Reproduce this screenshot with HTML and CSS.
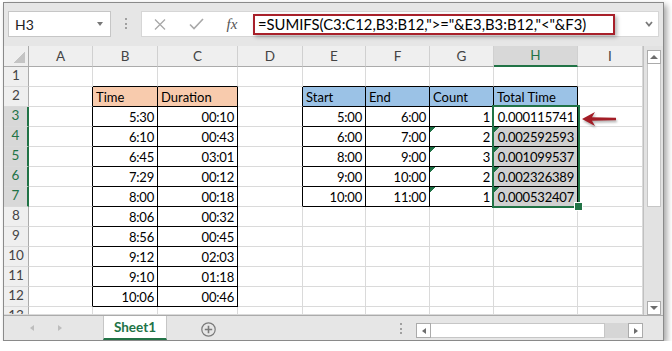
FILE: index.html
```html
<!DOCTYPE html>
<html lang="en">
<head>
  <meta charset="UTF-8">
  <title>SUMIFS time ranges</title>
  <link rel="stylesheet" href="styles.css">
</head>
<body>
<div class="window">
  <!-- name box + formula bar -->
  <div class="formula-bar">
    <div class="name-box"><span>H3</span><i class="caret"></i></div>
    <div class="grip"></div>
    <div class="fx-bar">
      <span class="fx-btn"><svg width="12" height="11" viewBox="0 0 12 11"><path d="M1 0.5 L11 10.5 M11 0.5 L1 10.5" stroke="#a8a8a8" stroke-width="1.3" fill="none"/></svg></span>
      <span class="fx-btn"><svg width="15" height="12" viewBox="0 0 15 12"><path d="M1 6.5 L5 10.5 L14 1" stroke="#a8a8a8" stroke-width="1.6" fill="none"/></svg></span>
      <span class="fx-btn fx-label">fx</span>
      <div class="formula">=SUMIFS(C3:C12,B3:B12,"&gt;="&amp;E3,B3:B12,"&lt;"&amp;F3)</div>
      <svg class="chev" width="8" height="6" viewBox="0 0 8 6"><path d="M1 1 L4 4.5 L7 1" stroke="#7a7a7a" stroke-width="1.8" fill="none"/></svg>
    </div>
  </div>

  <div class="main">
    <div class="grid-wrap">
      <div class="sheet">
        <div class="h corner"></div><div class="h">A</div><div class="h">B</div><div class="h">C</div><div class="h">D</div><div class="h">E</div><div class="h">F</div><div class="h">G</div><div class="h on">H</div><div class="h">I</div>

        <div class="r">1</div><div></div><div class="bt"></div><div class="bt"></div><div></div><div class="bt"></div><div class="bt"></div><div class="bt"></div><div class="bt"></div><div></div>

        <div class="r">2</div><div class="bl"></div><div class="bx or">Time</div><div class="bx or">Duration</div><div class="bl"></div><div class="bx bu">Start</div><div class="bx bu">End</div><div class="bx bu">Count</div><div class="bx bu">Total Time</div><div></div>

        <div class="r on">3</div><div class="bl"></div><div class="bx n">5:30</div><div class="bx n">00:10</div><div class="bl"></div><div class="bx n">5:00</div><div class="bx n">6:00</div><div class="bx n">1</div><div class="bx n">0.000115741</div><div></div>

        <div class="r on">4</div><div class="bl"></div><div class="bx n">6:10</div><div class="bx n">00:43</div><div class="bl"></div><div class="bx n">6:00</div><div class="bx n">7:00</div><div class="bx n tri">2</div><div class="bx n tri sel">0.002592593</div><div></div>

        <div class="r on">5</div><div class="bl"></div><div class="bx n">6:45</div><div class="bx n">03:01</div><div class="bl"></div><div class="bx n">8:00</div><div class="bx n">9:00</div><div class="bx n tri">3</div><div class="bx n tri sel">0.001099537</div><div></div>

        <div class="r on">6</div><div class="bl"></div><div class="bx n">7:29</div><div class="bx n">00:12</div><div class="bl"></div><div class="bx n">9:00</div><div class="bx n">10:00</div><div class="bx n tri">2</div><div class="bx n tri sel">0.002326389</div><div></div>

        <div class="r on">7</div><div class="bl"></div><div class="bx n">8:00</div><div class="bx n">00:18</div><div class="bl"></div><div class="bx n">10:00</div><div class="bx n">11:00</div><div class="bx n tri">1</div><div class="bx n tri sel">0.000532407</div><div></div>

        <div class="r">8</div><div class="bl"></div><div class="bx n">8:06</div><div class="bx n">00:32</div><div></div><div></div><div></div><div></div><div></div><div></div>

        <div class="r">9</div><div class="bl"></div><div class="bx n">8:56</div><div class="bx n">00:45</div><div></div><div></div><div></div><div></div><div></div><div></div>

        <div class="r">10</div><div class="bl"></div><div class="bx n">9:12</div><div class="bx n">02:03</div><div></div><div></div><div></div><div></div><div></div><div></div>

        <div class="r">11</div><div class="bl"></div><div class="bx n">9:10</div><div class="bx n">01:18</div><div></div><div></div><div></div><div></div><div></div><div></div>

        <div class="r">12</div><div class="bl"></div><div class="bx n">10:06</div><div class="bx n">00:46</div><div></div><div></div><div></div><div></div><div></div><div></div>

        <div class="r">13</div><div></div><div></div><div></div><div></div><div></div><div></div><div></div><div></div><div></div>
      </div>

      <!-- selection range and callout arrow drawn over the cells -->
      <div class="overlay">
        <div class="selection"></div>
        <svg class="arrow" width="36" height="16" viewBox="0 0 36 16"><path d="M1 8 L14 1 L11 6.3 L35 6.8 L35 9.2 L11 9.7 L14 15 Z" fill="#a31d26"/></svg>
      </div>
    </div>

    <div class="vscroll">
      <div class="vbtn"><i class="tri-up"></i></div>
      <div class="vthumb"></div>
      <div class="vtrack"></div>
      <div class="vbtn"><i class="tri-down"></i></div>
    </div>
  </div>

  <div class="tabbar">
    <div class="tab-nav"><i class="tri-left"></i><i class="tri-right"></i></div>
    <div class="tab">Sheet1</div>
    <svg class="add" width="15" height="15" viewBox="0 0 15 15"><circle cx="7.5" cy="7.5" r="6.7" stroke="#7a7a7a" stroke-width="1.2" fill="none"/><path d="M7.5 3.8 V11.2 M3.8 7.5 H11.2" stroke="#7a7a7a" stroke-width="1.6"/></svg>
    <div class="grip tgrip"></div>
    <div class="hscroll">
      <div class="hbtn"><i class="tri-left dark"></i></div>
      <div class="hthumb"></div>
      <div class="htrack"></div>
      <div class="hbtn"><i class="tri-right dark"></i></div>
    </div>
  </div>
</div>
</body>
</html>
```

FILE: styles.css
```css
* {
  margin: 0;
  padding: 0;
  box-sizing: border-box;
}

body {
  background: #fff;
  font-family: Lato, 'Liberation Sans', sans-serif;
  font-size: 13.5px;
  color: #000;
}

.window {
  margin: 2px 0 0 3px;
  width: 661px;
  height: 339px;
  border: 1px solid #8a8a8a;
  background: #e6e6e6;
  box-shadow: 3px 3px 6px rgba(0, 0, 0, 0.35);
  display: flex;
  flex-direction: column;
}

/* formula bar */
.formula-bar {
  height: 43px;
  flex: none;
  display: flex;
  align-items: flex-start;
  padding: 8px 0 0 4px;
}

.name-box {
  width: 103px;
  height: 26px;
  background: #fff;
  border: 1px solid #c6c6c6;
  display: flex;
  align-items: center;
  justify-content: space-between;
  padding: 0 7px 0 6px;
  font-size: 14px;
  color: #222;
}

.caret {
  border-left: 3.5px solid transparent;
  border-right: 3.5px solid transparent;
  border-top: 4px solid #777;
}

.grip {
  width: 2px;
  height: 11px;
  margin: 7px 14px 0;
  border-left: 2px dotted #a0a0a0;
}

.fx-bar {
  width: 518px;
  height: 26px;
  background: #fff;
  border: 1px solid #d6d6d6;
  display: flex;
  align-items: center;
}

.fx-btn {
  width: 36px;
  display: flex;
  justify-content: center;
}

.fx-label {
  font-family: 'Liberation Serif', serif;
  font-style: italic;
  font-size: 15px;
  color: #555;
}

.formula {
  margin-left: 3px;
  width: 362px;
  height: 21px;
  border: 2px solid #a8202a;
  box-shadow: 2px 2px 4px rgba(0, 0, 0, 0.3);
  padding-left: 3px;
  font-size: 14.8px;
  line-height: 17px;
  white-space: nowrap;
}

.chev {
  margin-left: auto;
  margin-right: 5px;
}

/* worksheet */
.main {
  height: 269px;
  flex: none;
  display: flex;
}

.grid-wrap {
  display: grid;
  width: 639px;
}

.grid-wrap > * {
  grid-area: 1 / 1;
}

.sheet,
.overlay {
  display: grid;
  grid-template-columns: 25px 64px 65px 80px 65px 63px 64px 64px 84px 65px;
  grid-template-rows: 21px repeat(12, 20px) 8px;
}

.sheet {
  background: #fff;
  overflow: hidden;
  font-size: 13px;
}

.sheet > div {
  border-right: 1px solid #dadada;
  border-bottom: 1px solid #dadada;
  padding: 2px 3px 0;
  line-height: 17px;
  white-space: nowrap;
  overflow: hidden;
}

.sheet > .h {
  background: #efefef;
  color: #444;
  font-size: 13.5px;
  text-align: center;
  border-right-color: #d0d0d0;
  border-bottom-color: #ababab;
  padding: 0;
  line-height: 20px;
}

.sheet > .corner {
  background-image: linear-gradient(135deg, transparent 50%, #c4c4c4 50%);
  background-repeat: no-repeat;
  background-size: 12px 11px;
  background-position: right 3px bottom 3px;
  border-right-color: #ababab;
}

.sheet > .h.on {
  background: #d8d8d8;
  color: #217346;
  border-bottom: 2px solid #217346;
  line-height: 19px;
}

.sheet > .r {
  background: #efefef;
  color: #444;
  font-size: 13.5px;
  text-align: center;
  border-right-color: #ababab;
  padding: 0;
  line-height: 17px;
}

.sheet > .r.on {
  background: #d8d8d8;
  color: #217346;
  border-right: 2px solid #217346;
}

.sheet > .bx {
  border-right-color: #000;
  border-bottom-color: #000;
}

.sheet > .bl {
  border-right-color: #000;
}

.sheet > .bt {
  border-bottom-color: #000;
}

.sheet > .or {
  background: #f8cbad;
}

.sheet > .bu {
  background: #9bc2e6;
}

.sheet > .n {
  text-align: right;
  letter-spacing: -0.2px;
}

.sheet > .sel {
  background-color: #d0d0d0;
}

.sheet > .tri {
  background-image: linear-gradient(135deg, #1e7145 3.6px, transparent 3.6px);
  background-repeat: no-repeat;
}

.overlay {
  pointer-events: none;
}

.selection {
  grid-row: 4 / 9;
  grid-column: 9;
  margin: -2px -2px -1px -2px;
  border: 2px solid #217346;
  position: relative;
}

.selection::after {
  content: '';
  position: absolute;
  right: -5px;
  bottom: -5px;
  width: 7px;
  height: 7px;
  background: #217346;
  border: 1px solid #fff;
}

.arrow {
  grid-row: 4;
  grid-column: 10;
  margin: 4px 0 0 3px;
  filter: drop-shadow(1px 2px 1px rgba(0, 0, 0, 0.3));
}

/* scrollbars */
.vscroll {
  width: 20px;
  display: flex;
  flex-direction: column;
  padding: 4px 2px 0 3px;
  border-left: 1px solid #c0c0c0;
  background: #e2e2e2;
}

.vbtn {
  height: 14px;
  flex: none;
  background: #fff;
  border: 1px solid #ababab;
  display: flex;
  align-items: center;
  justify-content: center;
}

.vthumb {
  height: 143px;
  background: #fff;
  border: 1px solid #c6c6c6;
  border-top: 0;
}

.vtrack {
  flex: 1;
}

.tri-up {
  border-left: 4px solid transparent;
  border-right: 4px solid transparent;
  border-bottom: 4px solid #6d6d6d;
}

.tri-down {
  border-left: 4px solid transparent;
  border-right: 4px solid transparent;
  border-top: 4px solid #6d6d6d;
}

.tri-left {
  border-top: 3.5px solid transparent;
  border-bottom: 3.5px solid transparent;
  border-right: 4px solid #bdbdbd;
}

.tri-right {
  border-top: 3.5px solid transparent;
  border-bottom: 3.5px solid transparent;
  border-left: 4px solid #bdbdbd;
}

.tri-left.dark {
  border-right-color: #6d6d6d;
}

.tri-right.dark {
  border-left-color: #6d6d6d;
}

/* sheet tabs */
.tabbar {
  height: 25px;
  flex: none;
  border-top: 1px solid #ababab;
  display: flex;
  align-items: center;
}

.tab-nav {
  width: 99px;
  display: flex;
  gap: 24px;
  padding-left: 26px;
}

.tab {
  width: 64px;
  align-self: stretch;
  background: #fff;
  border-left: 1px solid #c6c6c6;
  border-right: 1px solid #c6c6c6;
  border-bottom: 2px solid #217346;
  color: #217346;
  font-weight: bold;
  text-align: center;
  line-height: 22px;
}

.add {
  margin: 2px 0 0 34px;
}

.tgrip {
  margin: 0 0 0 184px;
}

.hscroll {
  margin-left: 14px;
  width: 227px;
  height: 15px;
  align-self: flex-end;
  margin-bottom: 2px;
  display: flex;
}

.hbtn {
  width: 15px;
  background: #fff;
  border: 1px solid #ababab;
  display: flex;
  align-items: center;
  justify-content: center;
}

.hthumb {
  width: 174px;
  background: #fff;
  border: 1px solid #c6c6c6;
  border-left: 0;
}

.htrack {
  flex: 1;
  background: #d6d6d6;
}
```
